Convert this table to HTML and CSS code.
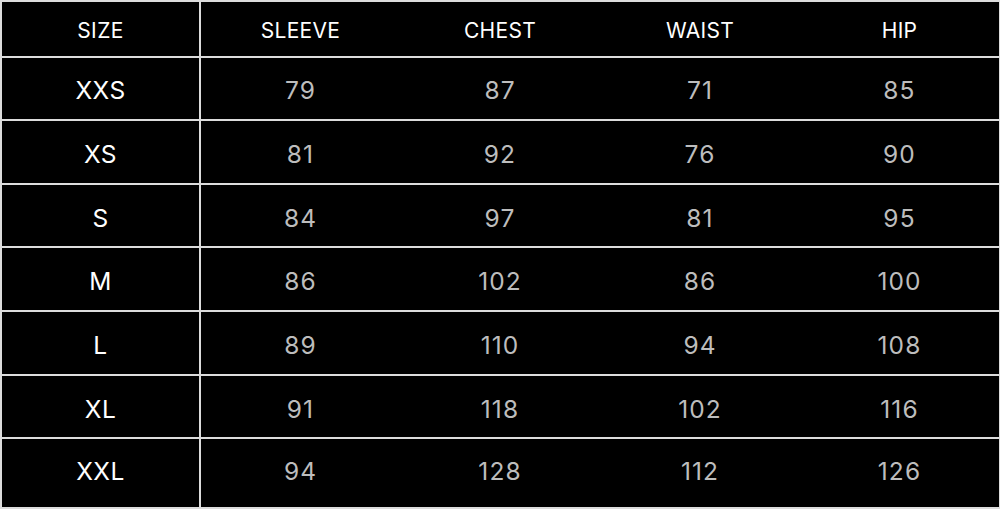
FILE: index.html
```html
<!DOCTYPE html>
<html lang="en">
<head>
<meta charset="utf-8">
<title>Size chart</title>
<link rel="stylesheet" href="styles.css">
</head>
<body>
<table class="size-chart">
  <colgroup>
    <col class="col-size">
    <col class="col-val">
    <col class="col-val">
    <col class="col-val">
    <col class="col-val">
  </colgroup>
  <thead>
    <tr class="head-row">
      <th class="size-cell">SIZE</th>
      <th>SLEEVE</th>
      <th>CHEST</th>
      <th>WAIST</th>
      <th>HIP</th>
    </tr>
  </thead>
  <tbody>
    <tr><td class="size-cell">XXS</td><td>79</td><td>87</td><td>71</td><td>85</td></tr>
    <tr><td class="size-cell">XS</td><td>81</td><td>92</td><td>76</td><td>90</td></tr>
    <tr><td class="size-cell">S</td><td>84</td><td>97</td><td>81</td><td>95</td></tr>
    <tr><td class="size-cell">M</td><td>86</td><td>102</td><td>86</td><td>100</td></tr>
    <tr><td class="size-cell">L</td><td>89</td><td>110</td><td>94</td><td>108</td></tr>
    <tr><td class="size-cell">XL</td><td>91</td><td>118</td><td>102</td><td>116</td></tr>
    <tr class="last-row"><td class="size-cell">XXL</td><td>94</td><td>128</td><td>112</td><td>126</td></tr>
  </tbody>
</table>
</body>
</html>
```
FILE: styles.css
```css
html, body {
  margin: 0;
  padding: 0;
  background: #ffffff;
}

body {
  font-family: Inter, "Liberation Sans", sans-serif;
}

.size-chart {
  width: 1000px;
  table-layout: fixed;
  border-collapse: collapse;
  background: #000000;
  border: 2px solid #dcdcdc;
}

.col-size { width: 199px; }
.col-val { width: 200px; }

.size-chart th,
.size-chart td {
  padding: 0;
  text-align: center;
  vertical-align: middle;
  border-bottom: 2px solid #dcdcdc;
}

.size-chart th {
  height: 50.5px;
  padding-top: 3px;
  color: #ffffff;
  font-size: 21px;
  font-weight: 400;
  letter-spacing: 0.3px;
}

.size-chart td {
  height: 57.67px;
  padding-top: 4px;
  color: #bdbdbd;
  font-size: 24.5px;
  font-weight: 400;
  letter-spacing: 1.1px;
}

.size-chart .size-cell {
  color: #ffffff;
  border-right: 2px solid #dcdcdc;
  letter-spacing: 0.4px;
}

.size-chart .last-row td {
  height: 60px;
  padding-top: 2px;
  padding-bottom: 6px;
}
```
